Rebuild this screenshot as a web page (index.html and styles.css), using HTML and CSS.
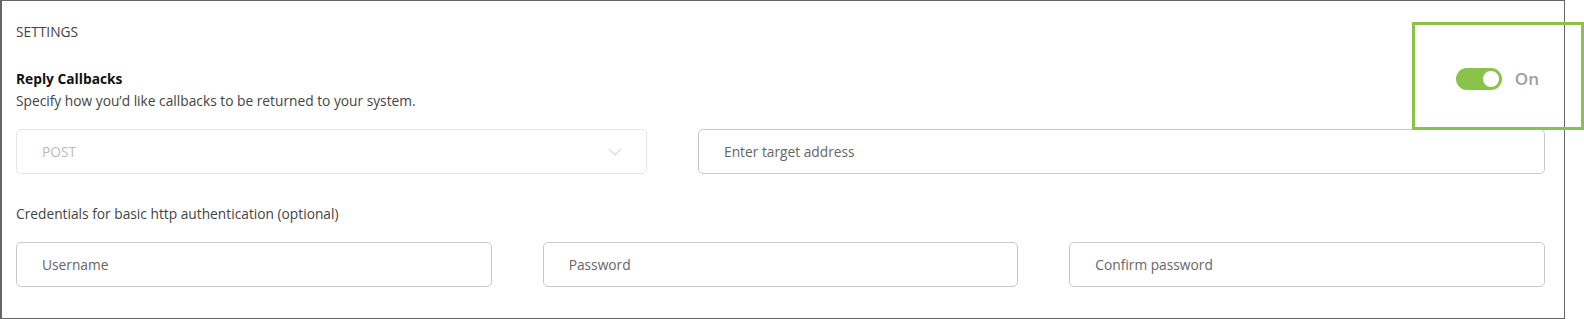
FILE: index.html
```html
<!DOCTYPE html>
<html lang="en">
<head>
<meta charset="utf-8">
<title>Settings</title>
<link rel="stylesheet" href="styles.css">
</head>
<body>
<div class="page">
  <section class="panel">
    <h2 class="section-title">SETTINGS</h2>
    <div class="header-row">
      <div class="header-text">
        <h3 class="header-title">Reply Callbacks</h3>
        <p class="header-desc">Specify how you’d like callbacks to be returned to your system.</p>
      </div>
      <div class="toggle-wrap">
        <span class="toggle"><span class="knob"></span></span>
        <span class="toggle-label">On</span>
      </div>
    </div>
    <div class="row row-two">
      <div class="field select disabled">
        <span class="select-value">POST</span>
        <svg class="chevron" width="14" height="8" viewBox="0 0 14 8"><path d="M1 1 L7 7 L13 1" fill="none" stroke="#dcdcdc" stroke-width="1.3"/></svg>
      </div>
      <div class="field"><span class="placeholder">Enter target address</span></div>
    </div>
    <p class="cred-label">Credentials for basic http authentication (optional)</p>
    <div class="row row-three">
      <div class="field"><span class="placeholder">Username</span></div>
      <div class="field"><span class="placeholder">Password</span></div>
      <div class="field"><span class="placeholder">Confirm password</span></div>
    </div>
  </section>
  <div class="highlight"></div>
</div>
</body>
</html>
```
FILE: styles.css
```css
* { box-sizing: border-box; }
html, body { margin: 0; padding: 0; background: #fff; }
body { font-family: "Open Sans", "Noto Sans", sans-serif; color: #444; }
.page { position: relative; width: 1584px; height: 319px; }
.panel {
  width: 1565px;
  height: 319px;
  border: 1px solid #666;
  border-left-width: 2px;
  padding: 22px 19px 0 14px;
}
.section-title {
  margin: 0;
  font-size: 13.75px;
  line-height: 18px;
  font-weight: 400;
  color: #444;
}
.header-row {
  margin-top: 27px;
  display: flex;
  justify-content: space-between;
  align-items: flex-start;
}
.header-title {
  margin: 0;
  font-size: 13.75px;
  line-height: 22px;
  font-weight: 700;
  color: #111;
}
.header-desc {
  margin: 0;
  font-size: 13.75px;
  line-height: 22px;
  color: #444;
}
.toggle-wrap {
  display: flex;
  align-items: center;
  gap: 13px;
  margin-top: 0;
  margin-right: 6px;
}
.toggle {
  width: 46px;
  height: 22px;
  border-radius: 11px;
  background: #8bc34a;
  display: flex;
  justify-content: flex-end;
  align-items: center;
  padding: 0 1px;
}
.knob {
  width: 20px;
  height: 20px;
  border-radius: 50%;
  background: #fff;
  border: 2px solid #8bc34a;
}
.toggle-label {
  font-size: 17px;
  font-weight: 600;
  color: #9e9e9e;
  line-height: 22px;
}
.row { display: grid; column-gap: 51px; }
.row-two { margin-top: 17px; grid-template-columns: 631px 1fr; }
.row-three { margin-top: 18px; grid-template-columns: 1fr 1fr 1fr; }
.field {
  height: 45px;
  border: 1px solid #c9c9c9;
  border-radius: 5px;
  display: flex;
  align-items: center;
  justify-content: space-between;
  padding: 0 24px 0 25px;
  font-size: 13.75px;
}
.field.disabled { border-color: #e6e6e6; }
.placeholder { color: #666; }
.select-value { color: #bbb; }
.chevron { display: block; }
.cred-label {
  margin: 30px 0 0;
  font-size: 13.75px;
  line-height: 20px;
  color: #444;
}
.highlight {
  position: absolute;
  left: 1412px;
  top: 22px;
  width: 172px;
  height: 108px;
  border: 3px solid #8bc34a;
}
```
